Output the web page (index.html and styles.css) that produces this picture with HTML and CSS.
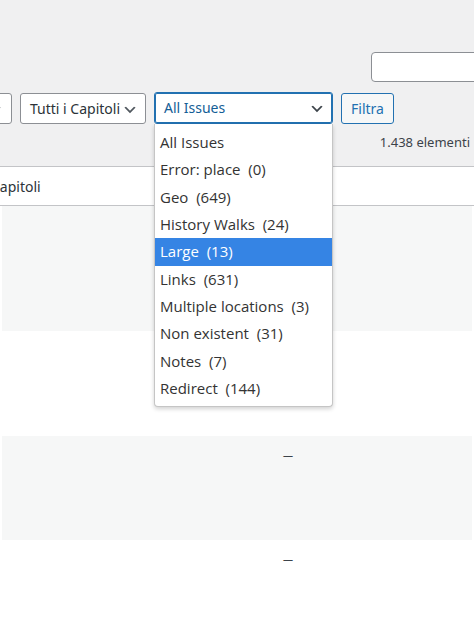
FILE: index.html
```html
<!DOCTYPE html>
<html lang="it">
<head>
<meta charset="utf-8">
<title>Issues</title>
<link rel="stylesheet" href="styles.css">
</head>
<body>
<div class="page">
  <div class="search-row">
    <div class="search-input"></div>
  </div>
  <div class="tablenav">
    <div class="select select-cut">
      <span class="select-text">Tutte le date</span>
      <svg class="chev" viewBox="0 0 20 20" aria-hidden="true"><path d="M5 6l5 5 5-5 2 1-7 7-7-7 2-1z"/></svg>
    </div>
    <div class="select select-chap">
      <span class="select-text">Tutti i Capitoli</span>
      <svg class="chev" viewBox="0 0 20 20" aria-hidden="true"><path d="M5 6l5 5 5-5 2 1-7 7-7-7 2-1z"/></svg>
    </div>
    <div class="issues-wrap">
      <div class="select select-issues">
        <span class="select-text">All Issues</span>
        <svg class="chev" viewBox="0 0 20 20" aria-hidden="true"><path d="M5 6l5 5 5-5 2 1-7 7-7-7 2-1z"/></svg>
      </div>
      <ul class="dropdown">
        <li>All Issues</li>
        <li>Error: place&nbsp; (0)</li>
        <li>Geo&nbsp; (649)</li>
        <li>History Walks&nbsp; (24)</li>
        <li class="active">Large&nbsp; (13)</li>
        <li>Links&nbsp; (631)</li>
        <li>Multiple locations&nbsp; (3)</li>
        <li>Non existent&nbsp; (31)</li>
        <li>Notes&nbsp; (7)</li>
        <li>Redirect&nbsp; (144)</li>
      </ul>
    </div>
    <div class="button">Filtra</div>
  </div>
  <div class="count-row">
    <span class="displaying-num">1.438 elementi</span>
  </div>
  <div class="table">
    <div class="thead">
      <span class="th-text">Capitoli</span>
    </div>
    <div class="tbody">
      <div class="row stripe row-1"></div>
      <div class="row row-2"></div>
      <div class="row stripe row-3"><span class="cell-dash">—</span></div>
      <div class="row row-4"><span class="cell-dash">—</span></div>
    </div>
  </div>
</div>
</body>
</html>
```

FILE: styles.css
```css
html, body {
  margin: 0;
  padding: 0;
}
body {
  background: #f0f0f1;
  font-family: "Noto Sans", "Open Sans", sans-serif;
  color: #2c3338;
  font-size: 14px;
  overflow: hidden;
}
.page {
  width: 474px;
  height: 630px;
  overflow: hidden;
  padding-top: 52px;
  box-sizing: border-box;
}
.search-row {
  display: flex;
  padding-left: 371px;
  height: 30px;
}
.search-input {
  flex: 0 0 140px;
  height: 30px;
  box-sizing: border-box;
  border: 1px solid #8c8f94;
  border-radius: 4px;
  background: #fff;
}
.tablenav {
  display: flex;
  gap: 8px;
  margin-top: 11px;
  margin-left: -108px;
  height: 31px;
  align-items: flex-start;
}
.select {
  position: relative;
  height: 31px;
  box-sizing: border-box;
  border: 1px solid #8c8f94;
  border-radius: 3px;
  background: #fff;
  display: flex;
  align-items: center;
  padding: 0 24px 0 9px;
  white-space: nowrap;
  flex: 0 0 auto;
}
.select-text {
  font-size: 14px;
  line-height: 20px;
}
.chev {
  position: absolute;
  right: 8px;
  top: 8px;
  width: 16px;
  height: 16px;
  fill: #50575e;
}
.select-cut {
  width: 120px;
}
.select-chap {
  width: 126px;
}
.select-chap .chev {
  right: 7px;
}
.issues-wrap {
  position: relative;
  flex: 0 0 179px;
}
.select-issues {
  width: 179px;
  height: 32px;
  margin-top: -1px;
  border-color: #2271b1;
  box-shadow: inset 0 0 0 1px #2271b1;
  color: #135e96;
  padding-left: 9px;
}
.select-issues .chev {
  right: 7px;
  top: 8px;
  fill: #3c434a;
}
.dropdown {
  position: absolute;
  top: 31px;
  left: 0;
  width: 179px;
  margin: 0;
  padding: 5px 0 4px;
  list-style: none;
  background: #fff;
  border: 1px solid #c5c5c5;
  border-top: none;
  border-radius: 0 0 4px 4px;
  box-sizing: border-box;
  box-shadow: 0 2px 4px rgba(0, 0, 0, 0.18);
  z-index: 5;
  font-family: "Open Sans", "Noto Sans", sans-serif;
  font-size: 15px;
  color: #333;
}
.dropdown li {
  height: 27.35px;
  line-height: 27.35px;
  padding-left: 5px;
  white-space: nowrap;
}
.dropdown li.active {
  background: #3584e4;
  color: #fff;
}
.button {
  height: 31px;
  box-sizing: border-box;
  border: 1px solid #2271b1;
  border-radius: 3px;
  background: #f6f7f7;
  color: #2271b1;
  font-size: 14px;
  line-height: 29px;
  padding: 0 9px;
  flex: 0 0 auto;
}
.count-row {
  display: flex;
  justify-content: flex-end;
  padding-right: 4px;
  margin-top: 9px;
  height: 20px;
}
.displaying-num {
  font-size: 13px;
  line-height: 18px;
  color: #3c434a;
}
.table {
  margin-top: 13px;
  background: #fff;
}
.thead {
  height: 38px;
  border-top: 1px solid #c3c4c7;
  border-bottom: 1px solid #c3c4c7;
  display: flex;
  align-items: center;
  padding-left: 0;
  overflow: hidden;
}
.th-text {
  margin-left: -9px;
  font-size: 14px;
  color: #2c3338;
}
.tbody {
  padding: 0 2px;
}
.row {
  display: flex;
  justify-content: flex-start;
  padding-left: 281px;
  padding-top: 8px;
  box-sizing: border-box;
}
.row-1 {
  height: 125px;
}
.row-2 {
  height: 105px;
}
.row-3 {
  height: 104px;
}
.row-4 {
  height: 100px;
}
.row.stripe {
  background: #f6f7f7;
}
.cell-dash {
  font-size: 10px;
  line-height: 22px;
  color: #3c434a;
}
```
